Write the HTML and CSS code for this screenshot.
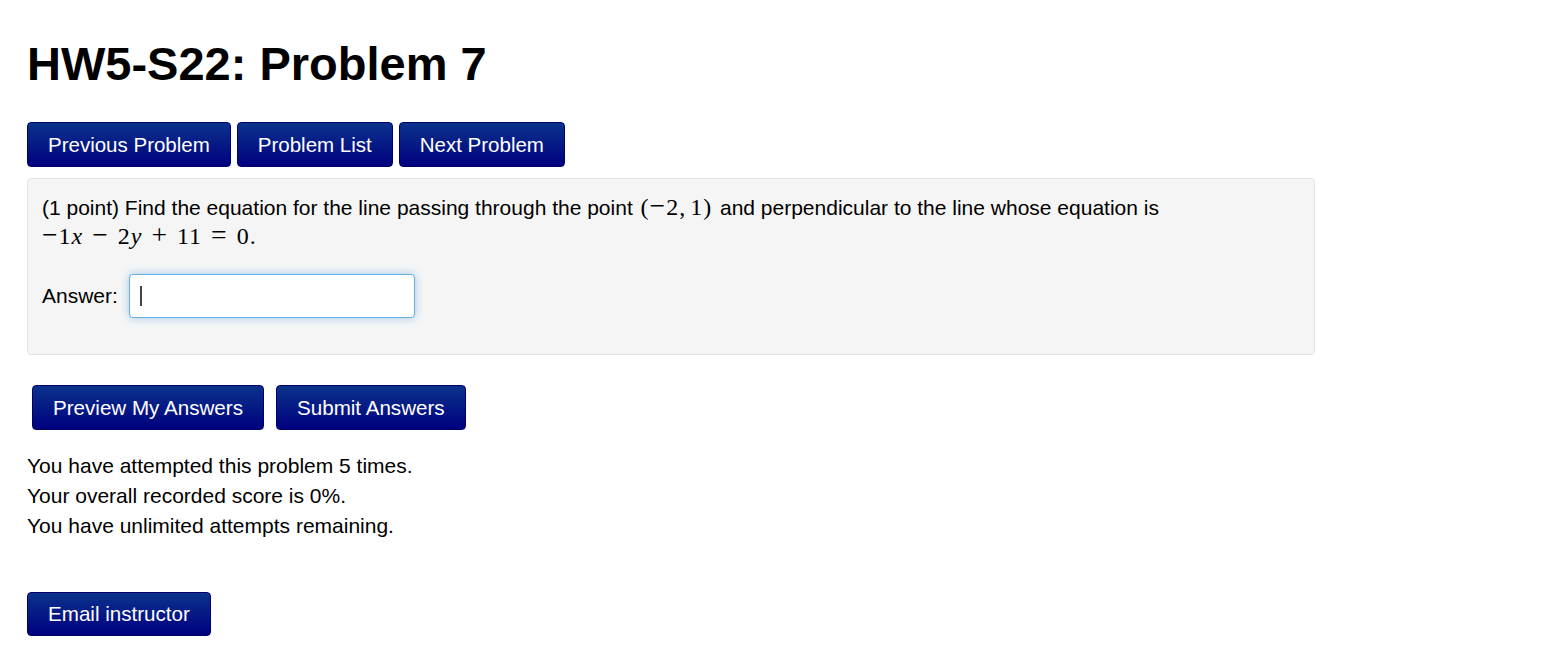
FILE: index.html
```html
<!DOCTYPE html>
<html lang="en">
<head>
    <meta charset="UTF-8">
    <title>HW5-S22: Problem 7</title>
    <link rel="stylesheet" href="styles.css">
</head>
<body>
    <div class="page">
        <h1 class="page-title">HW5-S22: Problem 7</h1>

        <div class="nav-buttons">
            <a class="btn" href="#">Previous Problem</a>
            <a class="btn" href="#">Problem List</a>
            <a class="btn" href="#">Next Problem</a>
        </div>

        <div class="problem-box">
            <p class="problem-text">(1 point) Find the equation for the line passing through the point <span class="math point">(<span class="neg">&minus;</span>2,<span class="sp"></span>1)</span> and perpendicular to the line whose equation is<br>
                <span class="math"><span class="neg">&minus;</span>1<i>x</i><span class="op">&minus;</span>2<i>y</i><span class="op">+</span>11<span class="op">=</span>0.</span></p>
            <div class="answer-row">
                <label for="answer">Answer:</label>
                <span class="answer-field">
                    <input type="text" id="answer" class="answer-input">
                    <span class="caret"></span>
                </span>
            </div>
        </div>

        <div class="submit-buttons">
            <button class="btn" type="button">Preview My Answers</button>
            <button class="btn" type="button">Submit Answers</button>
        </div>

        <div class="attempts">
            You have attempted this problem 5 times.<br>
            Your overall recorded score is 0%.<br>
            You have unlimited attempts remaining.
        </div>

        <div class="email-row">
            <button class="btn" type="button">Email instructor</button>
        </div>
    </div>
</body>
</html>
```

FILE: styles.css
```css
body { margin: 0; font-family: "Liberation Sans", Arial, sans-serif; color: #000; background: #fff; }
.page { padding: 40px 27px 0 27px; }

.page-title { margin: 0; font-size: 47px; line-height: 48px; font-weight: bold; }

.btn { display: inline-block; box-sizing: border-box; height: 45px; padding: 0 20px; font-family: "Liberation Sans", Arial, sans-serif; font-size: 20.6px; line-height: 43px; color: #fff; text-decoration: none; border: 1px solid #000066; border-radius: 4px; background: linear-gradient(to bottom, #0b338c, #00007f); cursor: pointer; }

.nav-buttons { display: flex; gap: 6px; margin-top: 34px; }
.nav-buttons .btn { font-size: 20.5px; }

.problem-box { box-sizing: border-box; width: 1288px; margin-top: 11px; padding: 14px 14px 36px 14px; background: #f5f5f5; border: 1px solid #e3e3e3; border-radius: 4px; }
.problem-text { margin: 0; font-size: 21px; line-height: 29px; }

/* typeset math */
.math { font-family: "Liberation Serif", "Times New Roman", serif; font-size: 24px; line-height: 0; letter-spacing: 1px; }
.math i { font-style: italic; }
.math .neg, .math .op { font-size: 1.15em; line-height: 0; }
.math .op { margin: 0 9px; }
.math .sp { display: inline-block; width: 4px; }
.math.point { margin: 0 2px; }

.answer-row { display: flex; align-items: center; gap: 11px; margin-top: 23px; font-size: 21px; }
.answer-field { position: relative; display: inline-block; }
.answer-input { box-sizing: border-box; width: 286px; height: 44px; padding: 0 10px; font-size: 18px; background: #fff; border: 1px solid #66afe9; border-radius: 4px; box-shadow: 0 0 8px rgba(102, 175, 233, 0.6); outline: none; }
.caret { position: absolute; left: 11px; top: 12px; width: 2px; height: 20px; background: #444; }

.submit-buttons { display: flex; gap: 12px; margin-top: 30px; padding-left: 5px; }

.attempts { margin-top: 21px; font-size: 21px; line-height: 30px; }

.email-row { margin-top: 51px; }
.email-row .btn { height: 44px; line-height: 42px; }
```
